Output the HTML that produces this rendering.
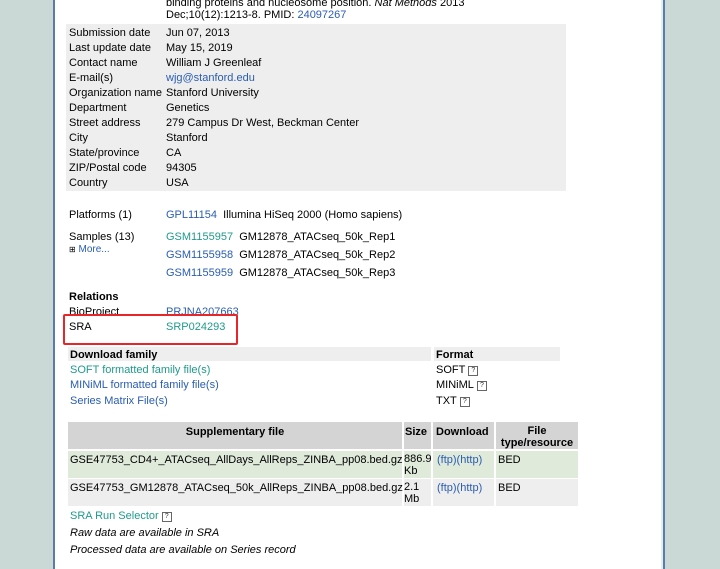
<!DOCTYPE html>
<html><head><style>
body{margin:0;width:720px;height:569px;overflow:hidden;background:#cbd9d6;font-family:"Liberation Sans",sans-serif;font-size:11px;color:#000;position:relative}
.page{position:absolute;left:55px;top:0;width:606px;height:569px;background:#fff}
.bl{position:absolute;top:0;width:2px;height:569px;background:#5a7bb0}
.t{position:absolute;white-space:nowrap;line-height:15px;margin-top:1px}
a,.a{color:#2a5db0;text-decoration:none}
.g{color:#1f9a8c}
.q{display:inline-block;width:8px;height:8px;border:1px solid #666;font-size:7px;line-height:8px;text-align:center;color:#333;vertical-align:1px;margin-left:3px}
b{font-weight:bold}
</style></head><body>
<div class="bl" style="left:53px"></div>
<div class="page"></div>
<div style="position:absolute;left:661px;top:0;width:2px;height:569px;background:#e4eef0"></div>
<div class="bl" style="left:663px"></div>

<div class="t" style="left:166px;top:-5px">binding proteins and nucleosome position. <i>Nat Methods</i> 2013</div>
<div class="t" style="left:166px;top:7px">Dec;10(12):1213-8. PMID: <a>24097267</a></div>

<div style="position:absolute;left:66px;top:24px;width:500px;height:167px;background:#eeeeee"></div>
<div class="t" style="left:69px;top:25px">Submission date<br>Last update date<br>Contact name<br>E-mail(s)<br>Organization name<br>Department<br>Street address<br>City<br>State/province<br>ZIP/Postal code<br>Country</div>
<div class="t" style="left:166px;top:25px">Jun 07, 2013<br>May 15, 2019<br>William J Greenleaf<br><a>wjg@stanford.edu</a><br>Stanford University<br>Genetics<br>279 Campus Dr West, Beckman Center<br>Stanford<br>CA<br>94305<br>USA</div>

<div class="t" style="left:69px;top:207px">Platforms (1)</div>
<div class="t" style="left:166px;top:207px"><a>GPL11154</a>&nbsp; Illumina HiSeq 2000 (Homo sapiens)</div>
<div class="t" style="left:69px;top:229px">Samples (13)</div>
<div class="t" style="left:69px;top:241px;font-size:10px"><span style="font-size:8px">⊞</span> <a>More...</a></div>
<div class="t" style="left:166px;top:229px"><span class="g">GSM1155957</span>&nbsp; GM12878_ATACseq_50k_Rep1</div>
<div class="t" style="left:166px;top:247px"><a>GSM1155958</a>&nbsp; GM12878_ATACseq_50k_Rep2</div>
<div class="t" style="left:166px;top:265px"><a>GSM1155959</a>&nbsp; GM12878_ATACseq_50k_Rep3</div>

<div class="t" style="left:69px;top:289px"><b>Relations</b></div>
<div class="t" style="left:69px;top:304px">BioProject</div>
<div class="t" style="left:166px;top:304px"><a>PRJNA207663</a></div>
<div style="position:absolute;left:63px;top:314px;width:171px;height:27px;border:2px solid #e8262a;border-radius:2px;background:#fff"></div>
<div class="t" style="left:69px;top:319px">SRA</div>
<div class="t" style="left:166px;top:319px" ><span class="g">SRP024293</span></div>

<div style="position:absolute;left:68px;top:347px;width:363px;height:14px;background:#eeeeee"></div>
<div style="position:absolute;left:434px;top:347px;width:126px;height:14px;background:#eeeeee"></div>
<div class="t" style="left:70px;top:347px"><b>Download family</b></div>
<div class="t" style="left:436px;top:347px"><b>Format</b></div>
<div class="t" style="left:70px;top:362px"><span class="g">SOFT formatted family file(s)</span></div>
<div class="t" style="left:70px;top:377px"><a>MINiML formatted family file(s)</a></div>
<div class="t" style="left:70px;top:393px"><a>Series Matrix File(s)</a></div>
<div class="t" style="left:436px;top:362px">SOFT<span class="q">?</span></div>
<div class="t" style="left:436px;top:377px">MINiML<span class="q">?</span></div>
<div class="t" style="left:436px;top:393px">TXT<span class="q">?</span></div>

<div style="position:absolute;left:68px;top:422px;width:334px;height:27px;background:#d4d4d4"></div>
<div style="position:absolute;left:404px;top:422px;width:27px;height:27px;background:#d4d4d4"></div>
<div style="position:absolute;left:433px;top:422px;width:61px;height:27px;background:#d4d4d4"></div>
<div style="position:absolute;left:496px;top:422px;width:82px;height:27px;background:#d4d4d4"></div>
<div style="position:absolute;left:68px;top:451px;width:334px;height:27px;background:#dfeadb"></div>
<div style="position:absolute;left:404px;top:451px;width:27px;height:27px;background:#dfeadb"></div>
<div style="position:absolute;left:433px;top:451px;width:61px;height:27px;background:#dfeadb"></div>
<div style="position:absolute;left:496px;top:451px;width:82px;height:27px;background:#dfeadb"></div>
<div style="position:absolute;left:68px;top:479px;width:334px;height:27px;background:#eeeeee"></div>
<div style="position:absolute;left:404px;top:479px;width:27px;height:27px;background:#eeeeee"></div>
<div style="position:absolute;left:433px;top:479px;width:61px;height:27px;background:#eeeeee"></div>
<div style="position:absolute;left:496px;top:479px;width:82px;height:27px;background:#eeeeee"></div>
<div class="t" style="left:68px;width:334px;text-align:center;top:424px"><b>Supplementary file</b></div>
<div class="t" style="left:405px;top:424px"><b>Size</b></div>
<div class="t" style="left:436px;top:424px"><b>Download</b></div>
<div class="t" style="left:496px;width:82px;text-align:center;top:424px;line-height:12px"><b>File<br>type/resource</b></div>
<div class="t" style="left:70px;top:452px">GSE47753_CD4+_ATACseq_AllDays_AllReps_ZINBA_pp08.bed.gz</div>
<div class="t" style="left:404px;top:452px;line-height:12px">886.9<br>Kb</div>
<div class="t" style="left:437px;top:452px"><a>(ftp)(http)</a></div>
<div class="t" style="left:498px;top:452px">BED</div>
<div class="t" style="left:70px;top:480px">GSE47753_GM12878_ATACseq_50k_AllReps_ZINBA_pp08.bed.gz</div>
<div class="t" style="left:404px;top:480px;line-height:12px">2.1<br>Mb</div>
<div class="t" style="left:437px;top:480px"><a>(ftp)(http)</a></div>
<div class="t" style="left:498px;top:480px">BED</div>

<div class="t" style="left:70px;top:508px"><span class="g">SRA Run Selector</span><span class="q">?</span></div>
<div class="t" style="left:70px;top:525px"><i>Raw data are available in SRA</i></div>
<div class="t" style="left:70px;top:542px"><i>Processed data are available on Series record</i></div>
</body></html>
